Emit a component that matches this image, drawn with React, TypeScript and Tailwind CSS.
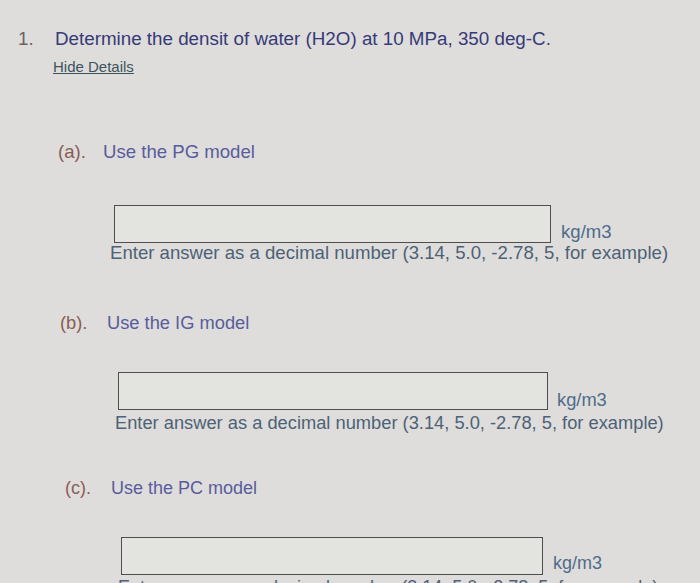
import React from "react";

interface Part {
  letter: string;
  model: string;
  wrap: string;
  label: string;
  row: string;
  box: string;
  unit: string;
  hint: string;
}

const parts: Part[] = [
  {
    letter: "(a).",
    model: "PG",
    wrap: "mt-[64px] ml-[40px] text-[18.6px]",
    label: "w-[45px]",
    row: "mt-[41px] ml-[56px]",
    box: "w-[437px]",
    unit: "mb-[1px] ml-[10px]",
    hint: "mt-[-1px] ml-[52px]",
  },
  {
    letter: "(b).",
    model: "IG",
    wrap: "mt-[47px] ml-[42px] text-[18.3px]",
    label: "w-[47px]",
    row: "mt-[37px] ml-[58px]",
    box: "w-[430px]",
    unit: "mb-[0px] ml-[9px]",
    hint: "mt-[2px] ml-[55px]",
  },
  {
    letter: "(c).",
    model: "PC",
    wrap: "mt-[42px] ml-[47px] text-[18px]",
    label: "w-[46px]",
    row: "mt-[37px] ml-[56px]",
    box: "w-[422px]",
    unit: "mb-[2px] ml-[10px]",
    hint: "mt-[1px] ml-[53px]",
  },
];

export default function App() {
  return (
    <div
      className="h-[583px] w-[700px] overflow-hidden bg-[#dedddb] pl-[18px] pt-[27px]"
      style={{ fontFamily: '"Liberation Sans", Arial, sans-serif' }}
    >
      {/* Question */}
      <div className="flex items-baseline text-[18.8px] leading-[24px]">
        <span className="w-[37px] text-[#6b625e]">1.</span>
        <span className="text-[#363a78]">
          Determine the densit of water (H2O) at 10 MPa, 350 deg-C.
        </span>
      </div>
      <div className="ml-[35px] mt-[7px] text-[15px] leading-[18px]">
        <a className="text-[#3d535e] underline">Hide Details</a>
      </div>

      {parts.map((p) => (
        <div key={p.letter} className={p.wrap}>
          <div className="flex items-baseline leading-[24px]">
            <span className={`${p.label} text-[#8a5c57]`}>{p.letter}</span>
            <span className="text-[#585c9c]">Use the {p.model} model</span>
          </div>
          <div className={`flex items-end ${p.row}`}>
            <input
              type="text"
              className={`h-[38px] ${p.box} border border-[#4e4e4e] bg-[#e3e3e0] outline-none`}
            />
            <span className={`${p.unit} leading-[20px] text-[#4e6c8a]`}>kg/m3</span>
          </div>
          <div className={`${p.hint} whitespace-nowrap leading-[22px] text-[#4d6276]`}>
            Enter answer as a decimal number (3.14, 5.0, -2.78, 5, for example)
          </div>
        </div>
      ))}
    </div>
  );
}
